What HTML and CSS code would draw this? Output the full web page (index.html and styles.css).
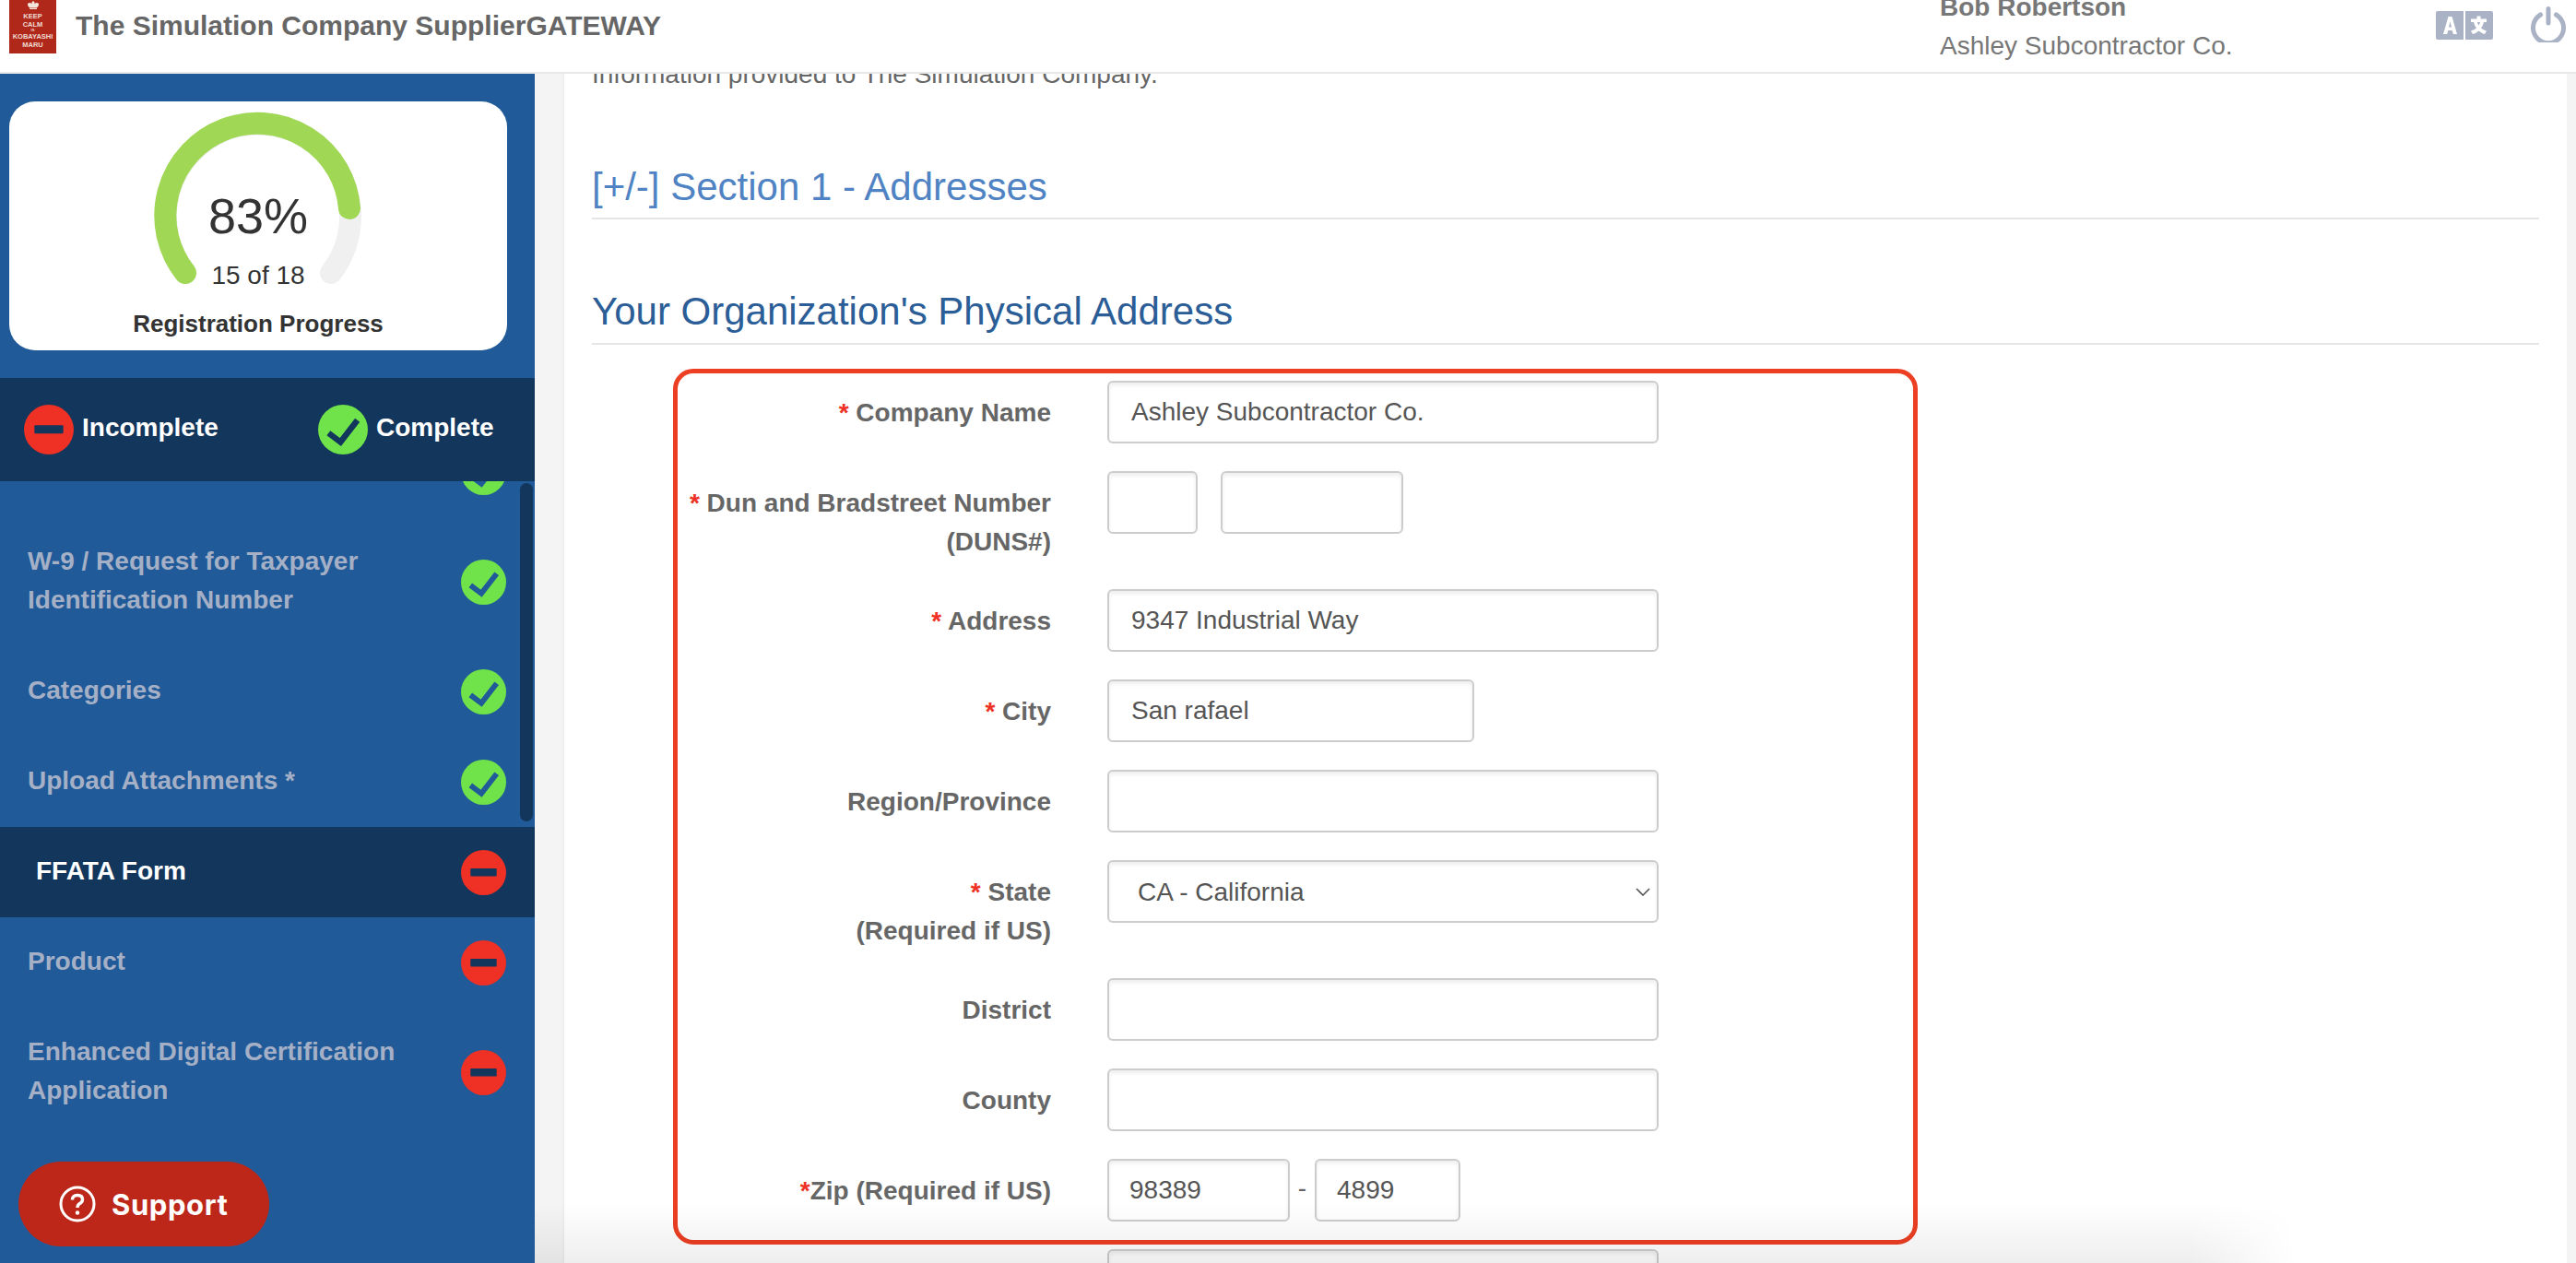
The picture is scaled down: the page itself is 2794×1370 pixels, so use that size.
FILE: index.html
```html
<!DOCTYPE html>
<html lang="en">
<head>
<meta charset="utf-8">
<title>The Simulation Company SupplierGATEWAY</title>
<link rel="stylesheet" href="styles.css">
</head>
<body>
<svg class="defs" width="0" height="0" aria-hidden="true">
  <symbol id="ok" viewBox="0 0 100 100"><circle cx="50" cy="50" r="50" fill="#6fe349"/><path d="M21 57 L45 75 L79 31" fill="none" stroke="currentColor" stroke-width="12"/></symbol>
  <symbol id="no" viewBox="0 0 100 100"><circle cx="50" cy="50" r="50" fill="#ee3124"/><rect x="21" y="41" width="58" height="17" rx="2" fill="#12365c"/></symbol>
</svg>
<header class="topbar">
  <div class="logo">
    <svg class="crown" viewBox="0 0 14 10"><path d="M2.500 8 Q0 5 1.500 3.500 Q3.500 2.500 5.500 4 Q5 2 7 1 Q9 2 8.500 4 Q10.500 2.500 12.500 3.500 Q14 5 11.500 8 Z" fill="#f3e4dc"/><rect x="3" y="8.500" width="8" height="1.500" fill="#f3e4dc"/></svg>
    <span>KEEP</span><span>CALM</span><span class="tiny">IS</span><span>KOBAYASHI</span><span>MARU</span>
  </div>
  <div class="brand">The Simulation Company SupplierGATEWAY</div>
  <div class="user">
    <div class="user-name">Bob Robertson</div>
    <div class="user-org">Ashley Subcontractor Co.</div>
  </div>
  <svg class="translate" viewBox="0 0 62 31">
    <path d="M2 0 H30 V31 H2 Q0 31 0 29 V2 Q0 0 2 0 Z M32 0 H60 Q62 0 62 2 V29 Q62 31 60 31 H32 Z" fill="#a9b3c5"/>
    <path d="M8 25 L13.500 6 H17.500 L23 25 H18.800 L17.800 21 H13.200 L12.200 25 Z M14 17.500 H17 L15.500 11.500 Z" fill="#fff"/>
    <path d="M38 8.500 H44.500 V5.500 H48.500 V8.500 H55 V12 H52 Q51 16 49 18.500 Q51.300 20.500 55 21.500 L53 25 Q49 23.800 46.500 21.500 Q44 23.800 40 25 L38 21.500 Q41.700 20.500 44 18.500 Q42 16 41 12 H38 Z M45 12 Q45.500 14 46.500 15.500 Q47.500 14 48 12 Z" fill="#fff"/>
  </svg>
  <svg class="power" viewBox="0 0 38 39">
    <path d="M10.500 9 A16.500 16.500 0 1 0 27.500 9" fill="none" stroke="#a9b3c5" stroke-width="5" stroke-linecap="round"/>
    <path d="M19 2.500 V18" fill="none" stroke="#a9b3c5" stroke-width="5" stroke-linecap="round"/>
  </svg>
</header>

<div class="shell">
  <aside class="sidebar">
    <div class="progress-wrap">
      <section class="progress-card">
        <svg class="gauge" viewBox="0 0 540 270">
          <path d="M191 186 A100 100 0 1 1 349 186" fill="none" stroke="#f0f0f0" stroke-width="24" stroke-linecap="round"/>
          <path d="M191 186 A100 100 0 1 1 369 116" fill="none" stroke="#a0d755" stroke-width="24" stroke-linecap="round"/>
        </svg>
        <div class="pct">83%</div>
        <div class="count">15 of 18</div>
        <div class="prog-title">Registration Progress</div>
      </section>
    </div>
    <div class="legend">
      <div class="legend-item"><svg class="legend-icon"><use href="#no"/></svg><span>Incomplete</span></div>
      <div class="legend-item legend-done"><svg class="legend-icon"><use href="#ok"/></svg><span>Complete</span></div>
    </div>
    <nav class="nav">
      <div class="nav-list">
        <div class="nav-item"><span></span><svg class="nav-icon"><use href="#ok"/></svg></div>
        <div class="nav-item nav-tall"><span>W-9 / Request for Taxpayer<br>Identification Number</span><svg class="nav-icon"><use href="#ok"/></svg></div>
        <div class="nav-item"><span>Categories</span><svg class="nav-icon"><use href="#ok"/></svg></div>
        <div class="nav-item"><span>Upload Attachments *</span><svg class="nav-icon"><use href="#ok"/></svg></div>
        <div class="nav-item nav-active"><span>FFATA Form</span><svg class="nav-icon"><use href="#no"/></svg></div>
        <div class="nav-item"><span>Product</span><svg class="nav-icon"><use href="#no"/></svg></div>
        <div class="nav-item nav-tall"><span>Enhanced Digital Certification<br>Application</span><svg class="nav-icon"><use href="#no"/></svg></div>
      </div>
      <div class="scroll-thumb"></div>
    </nav>
    <a class="support">
      <svg class="support-icon" viewBox="0 0 40 40"><circle cx="20" cy="20" r="18" fill="none" stroke="#fff" stroke-width="3"/><path d="M14.500 15.500 Q14.500 10.500 20 10.500 Q25.500 10.500 25.500 15 Q25.500 18 22.500 19.500 Q20 20.800 20 24" fill="none" stroke="#fff" stroke-width="3.400"/><circle cx="20" cy="29.500" r="2.200" fill="#fff"/></svg>
      <span>Support</span>
    </a>
  </aside>

  <main class="page">
    <div class="card">
      <div class="card-inner">
        <p class="intro">Information provided to The Simulation Company.</p>
        <h2 class="section-toggle">[+/-] Section 1 - Addresses</h2>
        <h2 class="section-title">Your Organization's Physical Address</h2>
        <form class="address-box">
          <div class="row"><label class="lbl"><b>*</b> Company Name</label><div class="fields"><input class="in in-full" value="Ashley Subcontractor Co."></div></div>
          <div class="row row-tall"><label class="lbl"><b>*</b> Dun and Bradstreet Number<br>(DUNS#)</label><div class="fields gap"><input class="in in-xs"><input class="in in-md"></div></div>
          <div class="row"><label class="lbl"><b>*</b> Address</label><div class="fields"><input class="in in-full" value="9347 Industrial Way"></div></div>
          <div class="row"><label class="lbl"><b>*</b> City</label><div class="fields"><input class="in in-city" value="San rafael"></div></div>
          <div class="row"><label class="lbl">Region/Province</label><div class="fields"><input class="in in-full"></div></div>
          <div class="row row-tall"><label class="lbl"><b>*</b> State<br>(Required if US)</label><div class="fields"><div class="select-wrap"><select class="in in-full in-select"><option>CA - California</option></select><svg class="chev" viewBox="0 0 16 9"><path d="M1 1 L8 8 L15 1" fill="none" stroke="#555" stroke-width="1.600"/></svg></div></div></div>
          <div class="row"><label class="lbl">District</label><div class="fields"><input class="in in-full"></div></div>
          <div class="row"><label class="lbl">County</label><div class="fields"><input class="in in-full"></div></div>
          <div class="row row-last"><label class="lbl"><b>*</b>Zip (Required if US)</label><div class="fields"><input class="in in-md in-tight" value="98389"><span class="dash">-</span><input class="in in-zip4 in-tight" value="4899"></div></div>
        </form>
        <div class="next-row"><input class="in in-full"></div>
      </div>
    </div>
  </main>
</div>
<div class="bottom-fade"></div>
</body>
</html>
```
FILE: styles.css
```css
* { box-sizing: border-box; }
html, body { margin: 0; height: 1370px; overflow: hidden; }
body { font-family: "Liberation Sans", Arial, sans-serif; background: #f4f4f4; color: #333; position: relative; }
.defs { position: absolute; }

.topbar { height: 80px; background: #fff; border-bottom: 2px solid #e8e8e8; display: flex; align-items: flex-start; padding-left: 10px; overflow: hidden; position: relative; z-index: 1; }
.logo { width: 51px; height: 58px; background: #b0281a; color: #efdcd4; display: flex; flex-direction: column; align-items: center; font-size: 7.5px; line-height: 9px; font-weight: 700; white-space: nowrap; overflow: hidden; }
.logo .crown { width: 14px; height: 10px; flex: none; margin-bottom: 3px; }
.logo .tiny { font-size: 4px; line-height: 4px; }
.brand { margin: 7px 0 0 21px; font-size: 30px; line-height: 42px; font-weight: 700; color: #666; }
.user { margin: -13px 0 0 auto; width: 539px; padding-left: 1px; font-size: 28px; line-height: 42px; color: #777; }
.user-name { font-weight: 700; }
.translate { width: 62px; height: 31px; margin-top: 12px; flex: none; }
.power { width: 38px; height: 39px; margin: 7px 11px 0 41px; flex: none; }

.shell { display: flex; height: 1290px; }
.sidebar { width: 580px; flex: none; background: #205a98; display: flex; flex-direction: column; position: relative; }
.progress-wrap { padding: 30px 30px 30px 10px; }
.progress-card { width: 540px; height: 270px; background: #fff; border-radius: 28px; position: relative; }
.gauge { position: absolute; inset: 0; width: 540px; height: 270px; }
.pct { position: absolute; left: 0; width: 540px; top: 92px; text-align: center; font-size: 54px; line-height: 64px; color: #333; }
.count { position: absolute; left: 0; width: 540px; top: 170px; text-align: center; font-size: 28px; line-height: 38px; color: #333; }
.prog-title { position: absolute; left: 0; width: 540px; top: 222px; text-align: center; font-size: 26px; line-height: 38px; font-weight: 700; color: #333; }

.legend { height: 112px; background: #12365c; display: flex; align-items: center; padding: 0 0 0 26px; color: #fff; font-size: 28px; font-weight: 700; flex: none; }
.legend-item { display: flex; align-items: center; width: 319px; }
.legend-item span { margin: -5px 0 0 9px; }
.legend-done { width: auto; }
.legend-icon { width: 54px; height: 54px; flex: none; color: #12365c; }

.nav { flex: 1; position: relative; overflow: hidden; }
.nav-list { margin-top: -59px; }
.nav-item { height: 98px; display: flex; align-items: center; justify-content: space-between; padding: 0 31px 0 30px; font-size: 28px; line-height: 42px; font-weight: 700; color: #a5b0c6; }
.nav-tall { height: 140px; }
.nav-item span { margin-top: -3px; }
.nav-icon { width: 49px; height: 49px; flex: none; color: #205a98; }
.nav-active { background: #12365c; color: #fff; padding-left: 39px; }
.scroll-thumb { position: absolute; left: 564px; top: 2px; width: 14px; height: 367px; border-radius: 7px; background: #12365c; }

.support { position: absolute; left: 20px; top: 1180px; width: 272px; height: 92px; border-radius: 46px; background: #bd2719; color: #fff; display: flex; align-items: center; padding-left: 44px; font-family: Inter, "Liberation Sans", sans-serif; font-size: 31px; font-weight: 700; letter-spacing: 0.6px; }
.support-icon { width: 40px; height: 40px; flex: none; margin-right: 17px; }

.page { flex: 1; min-width: 0; padding: 0 10px 0 32px; }
.card { height: 100%; background: #fff; overflow: hidden; box-shadow: -1px 0 2px rgba(0,0,0,.05); }
.card-inner { padding: 0 30px; margin-top: -20px; }
.intro { margin: 0; font-size: 28px; line-height: 42px; color: #666; }
.section-toggle { margin: 72px 0 0; height: 64px; border-bottom: 2px solid #e6e6e6; font-size: 42px; line-height: 58px; font-weight: 400; color: #4f83c3; }
.section-title { margin: 71px 0 0; height: 65px; border-bottom: 2px solid #e6e6e6; font-size: 42px; line-height: 58px; font-weight: 400; color: #2b5d97; }

.address-box { margin: 26px 0 0 88px; width: 1350px; height: 950px; border: 5px solid #ec3f23; border-radius: 22px; padding: 8px 0 0; }
.row { display: flex; height: 68px; margin-bottom: 30px; }
.row-tall { height: 98px; }
.lbl { width: 405px; flex: none; padding-top: 14px; text-align: right; font-size: 28px; line-height: 42px; font-weight: 700; color: #666; }
.lbl b { color: #ee3124; }
.row-tall .lbl { line-height: 41.5px; }
.fields { margin-left: 61px; display: flex; align-items: flex-start; }
.gap { gap: 25px; }
.in { height: 68px; border: 2px solid #ccc; border-radius: 6px; background: #fff; box-shadow: inset 0 3px 4px rgba(0,0,0,.07); padding: 0 24px; font: 28px "Liberation Sans", Arial, sans-serif; color: #555; outline: none; display: block; }
.in-full { width: 598px; }
.in-xs { width: 98px; }
.in-md { width: 198px; }
.in-city { width: 398px; }
.in-zip4 { width: 158px; }
.in-tight { padding: 0 22px; }
.in-select { appearance: none; -webkit-appearance: none; padding-left: 31px; }
.select-wrap { position: relative; }
.chev { position: absolute; right: 9px; top: 30px; width: 16px; height: 9px; }
.dash { width: 27px; text-align: center; font-size: 28px; line-height: 64px; color: #666; }
.next-row { margin: 5px 0 0 559px; }

.bottom-fade { position: absolute; left: 580px; bottom: 0; width: 1910px; height: 65px; pointer-events: none; background: linear-gradient(to bottom, rgba(0,0,0,0), rgba(0,0,0,.065)); -webkit-mask-image: linear-gradient(to right, #000 94%, transparent); mask-image: linear-gradient(to right, #000 94%, transparent); }
```
